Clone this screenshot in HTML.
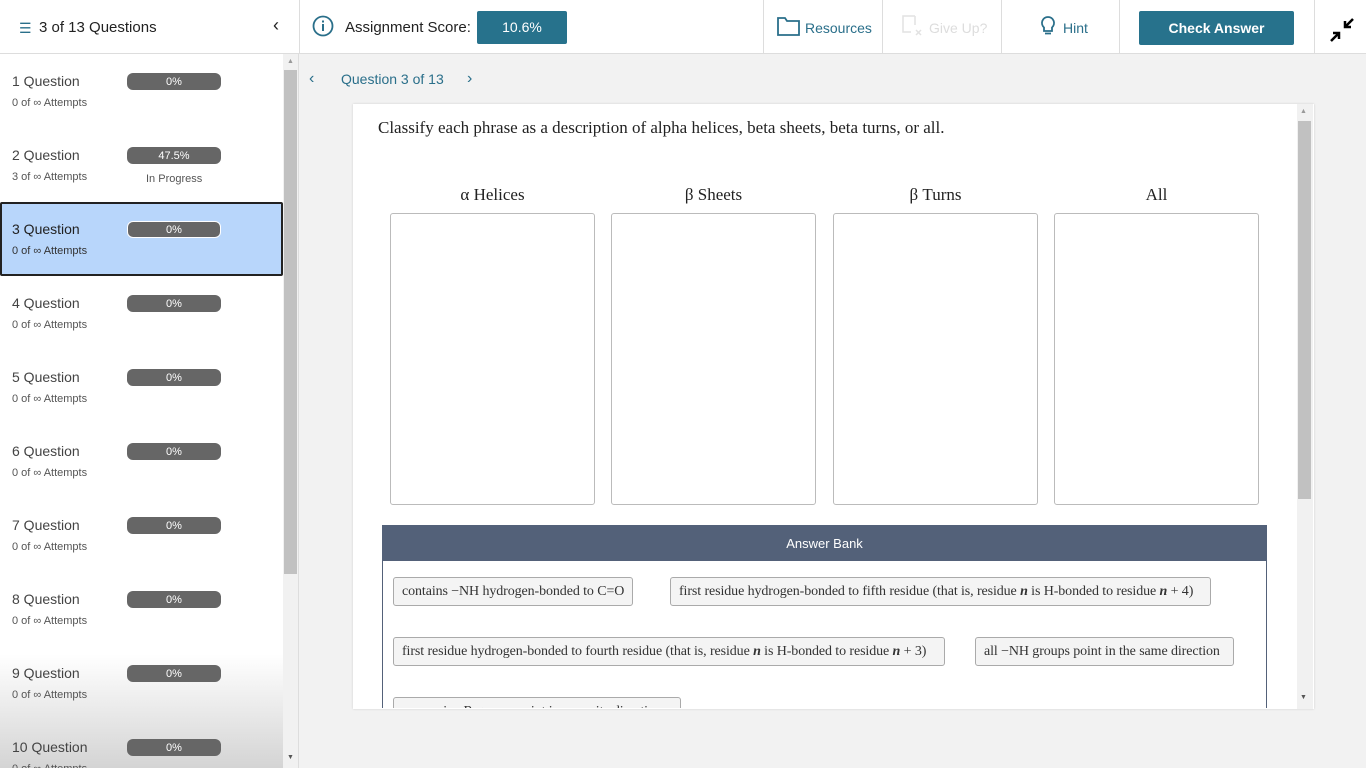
<!DOCTYPE html>
<html><head><meta charset="utf-8"><style>
*{box-sizing:border-box;margin:0;padding:0}
body{width:1366px;height:768px;overflow:hidden;background:#f2f2f2;font-family:"Liberation Sans",sans-serif;position:relative;color:#222}
.abs{position:absolute}
.hdr{left:0;top:0;width:1366px;height:54px;background:#fff;border-bottom:1px solid #ddd}
.vl{position:absolute;top:0;width:1px;height:53px;background:#ddd}
.sb{left:0;top:54px;width:299px;height:714px;background:#fff;border-right:1px solid #ddd;overflow:hidden}
.item{position:absolute;left:0;width:283px;height:74px}
.item .t{position:absolute;left:12px;top:19px;font-size:14px;color:#444}
.item .a{position:absolute;left:12px;top:43px;font-size:11px;color:#555}
.item .p{position:absolute;left:127px;top:19px;width:94px;height:17px;border-radius:6px;background:#666;color:#fff;font-size:11px;text-align:center;line-height:19px}
.box{position:absolute;top:213px;width:205px;height:292px;border:1.5px solid #bbb;border-radius:3px;background:#fff}
.col{position:absolute;top:185px;font-family:"Liberation Serif",serif;font-size:17px;text-align:center;width:205px}
.chip{position:absolute;height:29px;border:1px solid #aaa;border-radius:3px;background:#f4f4f4;font-family:"Liberation Serif",serif;font-size:14px;line-height:27px;padding:0 8px;white-space:nowrap;overflow:hidden;color:#333;letter-spacing:-0.1px}
</style></head><body>
<div class="abs hdr">
 <div class="abs" style="left:19px;top:20px;font-size:14px;color:#2a6f8a">☰</div>
 <div class="abs" style="left:39px;top:19px;font-size:15px">3 of 13 Questions</div>
 <div class="abs" style="left:273px;top:15px;font-size:18px">‹</div>
 <div class="vl" style="left:299px"></div>
 <svg class="abs" style="left:312px;top:15px" width="22" height="22"><circle cx="11" cy="11" r="9.5" fill="none" stroke="#2a6f8a" stroke-width="1.8"/><rect x="10" y="9" width="2" height="7" fill="#2a6f8a"/><rect x="10" y="5.5" width="2" height="2" fill="#2a6f8a"/></svg>
 <div class="abs" style="left:345px;top:19px;font-size:15px">Assignment Score:</div>
 <div class="abs" style="left:477px;top:11px;width:90px;height:33px;background:#27728c;border-radius:2px;color:#fff;font-size:14px;text-align:center;line-height:33px">10.6%</div>
 <div class="vl" style="left:763px"></div>
 <svg class="abs" style="left:777px;top:17px" width="23" height="19"><path d="M1 1h7l2 3h12v14H1z" fill="none" stroke="#2a6f8a" stroke-width="1.8"/></svg>
 <div class="abs" style="left:805px;top:20px;font-size:14px;color:#2a6f8a">Resources</div>
 <div class="vl" style="left:882px"></div>
 <svg class="abs" style="left:902px;top:15px" width="22" height="22"><path d="M13 1H1v16h8" fill="none" stroke="#e2e2e2" stroke-width="1.5"/><path d="M13 1v9M14 15l5 5M19 15l-5 5" stroke="#e2e2e2" stroke-width="1.5"/></svg>
 <div class="abs" style="left:929px;top:20px;font-size:14px;color:#ddd">Give Up?</div>
 <div class="vl" style="left:1001px"></div>
 <svg class="abs" style="left:1040px;top:15px" width="16" height="22"><path d="M8 2a6 6 0 0 0-4 10.5V16h8v-3.5A6 6 0 0 0 8 2zM5 18.5h6" fill="none" stroke="#2a6f8a" stroke-width="1.8"/></svg>
 <div class="abs" style="left:1063px;top:20px;font-size:14px;color:#2a6f8a">Hint</div>
 <div class="vl" style="left:1119px"></div>
 <div class="abs" style="left:1139px;top:11px;width:155px;height:34px;background:#27728c;border-radius:2px;color:#fff;font-size:14px;text-align:center;line-height:34px;font-weight:bold">Check Answer</div>
 <div class="vl" style="left:1314px"></div>
 <svg class="abs" style="left:1329px;top:17px" width="26" height="26"><path d="M24 2l-8 8M16 4v6h6M2 24l8-8M10 22v-6H4" stroke="#000" stroke-width="2.5" fill="none"/></svg>
</div>
<div class="abs sb">
 <div class="item" style="top:0"><div class="t">1 Question</div><div class="p">0%</div><div class="a">0 of ∞ Attempts</div></div>
 <div class="item" style="top:74px"><div class="t">2 Question</div><div class="p">47.5%</div><div class="a">3 of ∞ Attempts</div><div class="abs" style="left:146px;top:45px;font-size:11px;color:#555">In Progress</div></div>
 <div class="item" style="top:148px;background:#b8d6fb;border:2px solid #222;border-radius:2px"><div class="t" style="left:10px;top:17px;color:#222">3 Question</div><div class="p" style="left:125px;top:17px;border:1px solid #fff;line-height:17px">0%</div><div class="a" style="left:10px;top:41px;color:#333">0 of ∞ Attempts</div></div>
 <div class="item" style="top:222px"><div class="t">4 Question</div><div class="p">0%</div><div class="a">0 of ∞ Attempts</div></div>
 <div class="item" style="top:296px"><div class="t">5 Question</div><div class="p">0%</div><div class="a">0 of ∞ Attempts</div></div>
 <div class="item" style="top:370px"><div class="t">6 Question</div><div class="p">0%</div><div class="a">0 of ∞ Attempts</div></div>
 <div class="item" style="top:444px"><div class="t">7 Question</div><div class="p">0%</div><div class="a">0 of ∞ Attempts</div></div>
 <div class="item" style="top:518px"><div class="t">8 Question</div><div class="p">0%</div><div class="a">0 of ∞ Attempts</div></div>
 <div class="abs" style="left:0;top:600px;width:283px;height:114px;background:linear-gradient(#fff,#d4d4d4)"></div>
 <div class="item" style="top:592px"><div class="t">9 Question</div><div class="p">0%</div><div class="a">0 of ∞ Attempts</div></div>
 <div class="item" style="top:666px"><div class="t">10 Question</div><div class="p">0%</div><div class="a">0 of ∞ Attempts</div></div>
 <div class="abs" style="left:283px;top:0;width:15px;height:714px;background:#f1f1f1"></div>
 <div class="abs" style="left:284px;top:16px;width:13px;height:504px;background:#c1c1c1"></div>
 <div class="abs" style="left:287px;top:4px;font-size:7px;color:#999">▲</div>
 <div class="abs" style="left:287px;top:700px;font-size:7px;color:#555">▼</div>
</div>
<div class="abs" style="left:309px;top:70px;font-size:16px;color:#2a6f8a">‹</div>
<div class="abs" style="left:341px;top:71px;font-size:14px;color:#2a6f8a">Question 3 of 13</div>
<div class="abs" style="left:467px;top:70px;font-size:16px;color:#2a6f8a">›</div>
<div class="abs" style="left:353px;top:104px;width:961px;height:605px;background:#fff;box-shadow:0 0 2px #ccc;overflow:hidden">
 <div class="abs" style="left:25px;top:14px;font-family:'Liberation Serif',serif;font-size:17px">Classify each phrase as a description of alpha helices, beta sheets, beta turns, or all.</div>
 <div class="abs" style="left:944px;top:0;width:16px;height:605px;background:#f1f1f1"></div>
 <div class="abs" style="left:945px;top:17px;width:13px;height:378px;background:#c1c1c1"></div>
 <div class="abs" style="left:947px;top:4px;font-size:7px;color:#999">▲</div>
 <div class="abs" style="left:947px;top:590px;font-size:7px;color:#555">▼</div>
</div>
<div class="col" style="left:390px">α Helices</div>
<div class="col" style="left:611px">β Sheets</div>
<div class="col" style="left:833px">β Turns</div>
<div class="col" style="left:1054px">All</div>
<div class="box" style="left:390px"></div>
<div class="box" style="left:611px"></div>
<div class="box" style="left:833px"></div>
<div class="box" style="left:1054px"></div>
<div class="abs" style="left:382px;top:525px;width:885px;height:183px;border:1px solid #536179;border-bottom:none;background:#fff;overflow:hidden">
 <div style="height:35px;background:#536179;color:#fff;font-size:13px;text-align:center;line-height:35px">Answer Bank</div>
 <div class="chip" style="left:10px;top:51px">contains −NH hydrogen-bonded to C=O</div>
 <div class="chip" style="left:287px;top:51px;width:541px">first residue hydrogen-bonded to fifth residue (that is, residue <i><b>n</b></i> is H-bonded to residue <i><b>n</b></i> + 4)</div>
 <div class="chip" style="left:10px;top:111px;width:552px">first residue hydrogen-bonded to fourth residue (that is, residue <i><b>n</b></i> is H-bonded to residue <i><b>n</b></i> + 3)</div>
 <div class="chip" style="left:592px;top:111px;width:259px">all −NH groups point in the same direction</div>
 <div class="chip" style="left:10px;top:171px;width:288px">successive R groups point in opposite directions</div>
</div>
</body></html>
